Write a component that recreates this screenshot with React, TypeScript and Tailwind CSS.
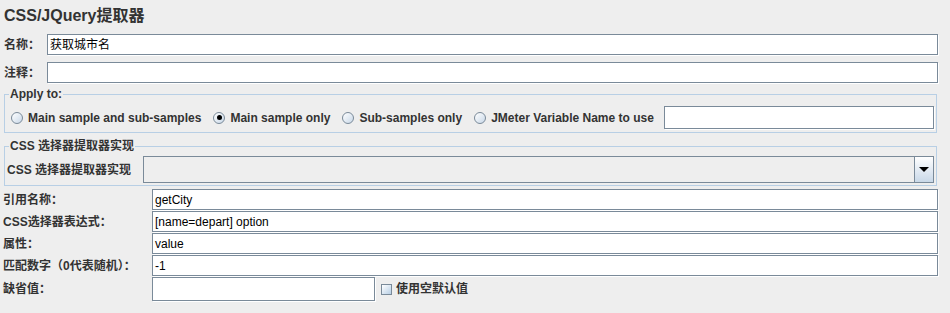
import React from 'react';

const field =
    'bg-white border border-[#7a8a99] shadow-[1px_1px_0_#ffffff] flex items-center pl-[2px] text-[12px] font-normal text-black';

function Radio({ checked, label }: { checked?: boolean; label: string }) {
    return (
        <div className="flex items-center gap-[5px]">
            <div className="w-[12px] h-[12px] rounded-full border border-[#7a8a99] bg-gradient-to-br from-white to-[#c9d8e8] flex items-center justify-center">
                {checked && <div className="w-[5px] h-[5px] rounded-full bg-black" />}
            </div>
            <span className="font-bold">{label}</span>
        </div>
    );
}

function Row({ label, value, last }: { label: string; value?: string; last?: boolean }) {
    return (
        <div className="flex items-center">
            <div className="w-[152px] pl-[3px] font-bold shrink-0">{label}</div>
            {last ? (
                <div className="flex items-center">
                    <div className={`${field} w-[223px] h-[24px]`} />
                    <div className="ml-[6px] w-[11px] h-[11px] border border-[#7a8a99] bg-gradient-to-br from-white to-[#b8cfe5]" />
                    <span className="ml-[4px] font-bold">使用空默认值</span>
                </div>
            ) : (
                <div className={`${field} flex-1 h-[21px] mr-[12px]`}>{value}</div>
            )}
        </div>
    );
}

export default function App() {
    return (
        <div className="w-[950px] h-[313px] bg-[#eeeeee] text-[12px] leading-[14px] text-[#333333] font-['Liberation_Sans','Noto_Sans_CJK_SC',sans-serif] overflow-hidden">
            {/* Title */}
            <div className="h-[34px] pl-[4px] pt-[7px] text-[16px] leading-[18px] font-bold">CSS/JQuery提取器</div>

            {/* Name / comment */}
            <div className="flex items-center">
                <div className="w-[47px] pl-[4px] font-bold shrink-0">名称：</div>
                <div className={`${field} flex-1 h-[21px] mr-[12px]`}>获取城市名</div>
            </div>
            <div className="flex items-center mt-[7px]">
                <div className="w-[47px] pl-[4px] font-bold shrink-0">注释：</div>
                <div className={`${field} flex-1 h-[21px] mr-[12px]`} />
            </div>

            {/* Apply to */}
            <fieldset className="mt-[4px] ml-[4px] mr-[13px] border border-[#b8cfe5]">
                <legend className="ml-[4px] px-[1px] font-bold">Apply to:</legend>
                <div className="flex items-center pl-[6px] pr-[2px] pt-[5px] pb-[3px]">
                    <div className="flex items-center gap-[12px]">
                        <Radio label="Main sample and sub-samples" />
                        <Radio checked label="Main sample only" />
                        <Radio label="Sub-samples only" />
                        <Radio label="JMeter Variable Name to use" />
                    </div>
                    <div className={`${field} flex-1 h-[23px] ml-[10px]`} />
                </div>
            </fieldset>

            {/* CSS selector implementation */}
            <fieldset className="mt-[6px] ml-[4px] mr-[13px] border border-[#b8cfe5]">
                <legend className="ml-[4px] px-[1px] font-bold">CSS 选择器提取器实现</legend>
                <div className="flex items-center pl-[2px] pr-[2px] pt-[3px] pb-[2px]">
                    <div className="w-[136px] font-bold shrink-0">CSS 选择器提取器实现</div>
                    <div className="flex-1 h-[27px] border border-[#7a8a99] bg-[#eeeeee] flex justify-end">
                        <div className="w-[19px] h-full border-l border-[#7a8a99] bg-gradient-to-b from-white to-[#c9d8e8] flex items-center justify-center">
                            <div className="w-0 h-0 border-l-[5px] border-r-[5px] border-t-[5px] border-l-transparent border-r-transparent border-t-black" />
                        </div>
                    </div>
                </div>
            </fieldset>

            {/* Extractor fields */}
            <div className="flex flex-col gap-[1px] mt-[3px]">
                <Row label="引用名称：" value="getCity" />
                <Row label="CSS选择器表达式：" value="[name=depart] option" />
                <Row label="属性：" value="value" />
                <Row label="匹配数字（0代表随机）：" value="-1" />
                <Row label="缺省值：" last />
            </div>
        </div>
    );
}
